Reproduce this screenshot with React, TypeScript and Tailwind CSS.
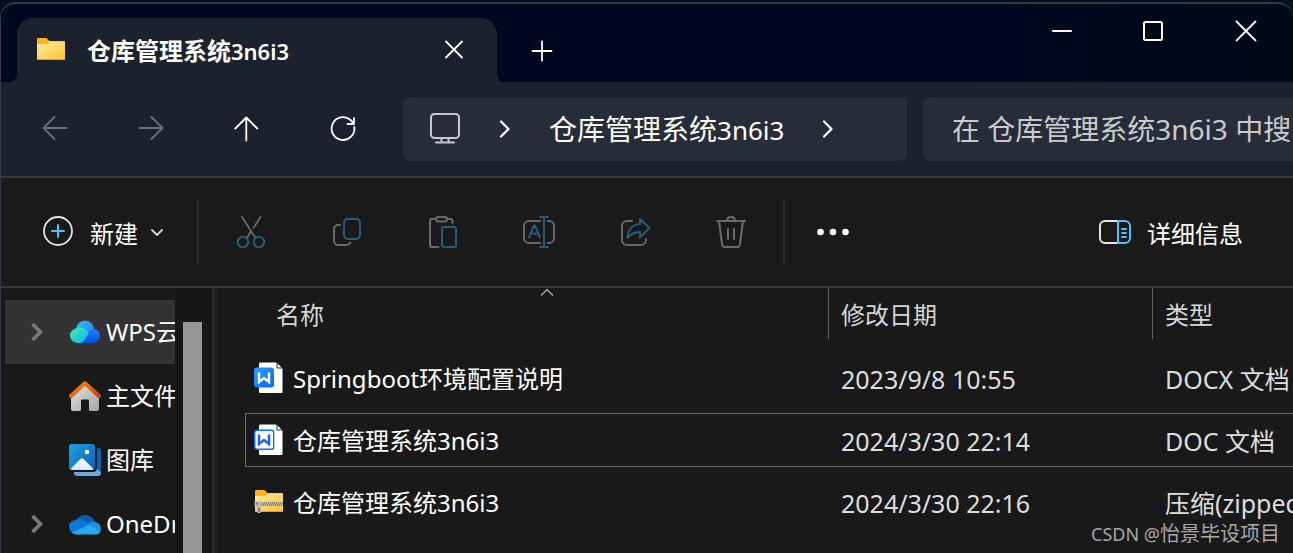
import type { ReactNode } from "react";

const FOLDER_NAME = "仓库管理系统";
const FOLDER_CODE = "3n6i3";

function FolderIcon({ zipped = false, id }: { zipped?: boolean; id: string }) {
  return (
    <svg width="32" height="32" viewBox="0 0 32 32" className="shrink-0" aria-hidden="true">
      <defs>
        <linearGradient id={id} x1="0" y1="0" x2="1" y2="1">
          <stop offset="0" stopColor="#ffe9a2" />
          <stop offset="1" stopColor="#fbc42f" />
        </linearGradient>
      </defs>
      <path d="M2 5A1 1 0 0 1 3 4H11.500L14.500 7H29A1 1 0 0 1 30 8V20H2Z" fill="#fbb419" />
      <path d="M2 10H12L15 7.500H29A1 1 0 0 1 30 8.500V25A1 1 0 0 1 29 26H3A1 1 0 0 1 2 25Z" fill={`url(#${id})`} />
      <path d="M2.500 25.500H29.500" stroke="#e3a21a" strokeWidth="1" />
      {zipped && (
        <g>
          <path d="M6 16H30V20H6Z" fill="#8b8471" />
          <path d="M8 17H30M9 19H30" stroke="#f1eee2" strokeWidth="1" strokeDasharray="1 1" />
          <path d="M1.500 15.500H8.500V20.500L7.500 27H4.500L3.500 20.500H1.500Z" fill="#b9b9b9" />
          <path d="M3 16.500H5V18.500H3Z" fill="#777" />
          <path d="M5.200 22H6.800V25.500H5.200Z" fill="#6b6b6b" />
        </g>
      )}
    </svg>
  );
}

function WpsIcon({ outlined = false, id }: { outlined?: boolean; id: string }) {
  return (
    <svg width="32" height="32" viewBox="0 0 32 32" className="shrink-0" aria-hidden="true">
      <defs>
        <linearGradient id={id} x1="0" y1="0" x2="1" y2="1">
          <stop offset="0" stopColor="#2aa0ff" />
          <stop offset="1" stopColor="#0a62f5" />
        </linearGradient>
      </defs>
      <path d="M6 1.500A1 1 0 0 1 7 .5H23.500L29.500 6.500V30A1 1 0 0 1 28.500 31H7A1 1 0 0 1 6 30Z" fill="#fff" />
      <path d="M23.500 0V5.500A1 1 0 0 0 24.500 6.500H30L23.500 0" fill="#222b38" />
      <path d="M24.500 1.500L28.500 5.500H24.500Z" fill="#fff" />
      {outlined ? (
        <rect x="1.700" y="6.200" width="19" height="19" rx="2.500" fill="#fff" stroke="#0f6bff" strokeWidth="1.400" />
      ) : (
        <rect x="1" y="5.500" width="20" height="20" rx="3" fill={`url(#${id})`} />
      )}
      <path
        d="M6 10.500V20L11 16L16 20V10.500"
        fill="none"
        stroke={outlined ? "#0f62ff" : "#fff"}
        strokeWidth="2.400"
      />
    </svg>
  );
}

function WpsCloudIcon() {
  return (
    <svg width="32" height="32" viewBox="0 0 32 32" className="shrink-0" aria-hidden="true">
      <defs>
        <linearGradient id="wc-top" x1="0" y1="0" x2="1" y2="1">
          <stop offset="0" stopColor="#38b6ff" />
          <stop offset="1" stopColor="#1687ff" />
        </linearGradient>
        <linearGradient id="wc-left" x1="0" y1="0" x2="1" y2="1">
          <stop offset="0" stopColor="#4df0a0" />
          <stop offset="1" stopColor="#00b4ff" />
        </linearGradient>
        <linearGradient id="wc-right" x1="0" y1="0" x2="0" y2="1">
          <stop offset="0" stopColor="#1d7cff" />
          <stop offset="1" stopColor="#0750d8" />
        </linearGradient>
      </defs>
      <circle cx="16" cy="13.500" r="9" fill="url(#wc-top)" />
      <path d="M12 27L19 17.500C22 10 31 13 31 19.500C31 24 28 27 23.500 27Z" fill="url(#wc-right)" />
      <path d="M9 12C14 11 18 14 19.500 18L15 24.500C13.500 26.500 12 27 9.500 27C4.500 27 1 23.500 1 19.500C1 15.500 4.500 12.500 9 12Z" fill="url(#wc-left)" />
    </svg>
  );
}

function HomeIcon() {
  return (
    <svg width="32" height="32" viewBox="0 0 32 32" className="shrink-0" aria-hidden="true">
      <defs>
        <linearGradient id="home-wall" x1="0" y1="0" x2="1" y2="1">
          <stop offset="0" stopColor="#e3e3e3" />
          <stop offset="1" stopColor="#a5a5a5" />
        </linearGradient>
        <linearGradient id="home-roof" x1="0" y1="0" x2="1" y2="1">
          <stop offset="0" stopColor="#f99113" />
          <stop offset="1" stopColor="#cf3f0c" />
        </linearGradient>
      </defs>
      <path d="M2 15.500L16 3.500L30 15.500V29A2 2 0 0 1 28 31H21.500A1.500 1.500 0 0 1 20 29.500V20.500A1 1 0 0 0 19 19.500H13A1 1 0 0 0 12 20.500V29.500A1.500 1.500 0 0 1 10.500 31H4A2 2 0 0 1 2 29Z" fill="url(#home-wall)" />
      <path d="M2 16L16 3.300L30 16" fill="none" stroke="url(#home-roof)" strokeWidth="4" strokeLinecap="round" strokeLinejoin="round" />
    </svg>
  );
}

function GalleryIcon() {
  return (
    <svg width="32" height="32" viewBox="0 0 32 32" className="shrink-0" aria-hidden="true">
      <defs>
        <linearGradient id="gal-sky" x1="0" y1="0" x2="1" y2="1">
          <stop offset="0" stopColor="#1fa0e6" />
          <stop offset="1" stopColor="#0b61b0" />
        </linearGradient>
        <linearGradient id="gal-hill" x1="0" y1="0" x2="0" y2="1">
          <stop offset="0" stopColor="#fff" />
          <stop offset="1" stopColor="#cfe8fb" />
        </linearGradient>
      </defs>
      <path d="M28 4H29.500A2.500 2.500 0 0 1 32 6.500V29A3 3 0 0 1 29 32L26 28Z" fill="#0e5fae" />
      <path d="M5 28H24Q28 28 28 24L32 29A3 3 0 0 1 29 32H8A3.500 3.500 0 0 1 5 28Z" fill="#6fa5dc" />
      <rect width="26" height="26" rx="2.500" fill="url(#gal-sky)" />
      <path d="M1.500 25L12 14.500Q13 13.700 14 14.500L24.500 25Q23.500 26 22 26H4Q2.500 26 1.500 25Z" fill="url(#gal-hill)" />
      <circle cx="18" cy="8" r="2.200" fill="#fff" />
      <path d="M27 4V24Q27 27 24 27H4" fill="none" stroke="#191919" strokeWidth="1.600" />
    </svg>
  );
}

function OneDriveIcon() {
  return (
    <svg width="32" height="32" viewBox="0 0 32 32" className="shrink-0" aria-hidden="true">
      <path d="M7.500 12A9.800 9.800 0 0 1 25.500 14L17 20Z" fill="#0a5cad" />
      <path d="M7.500 11.500C11 10.500 13.500 11.500 15.500 13L21 17L4 25.500C-2.500 21 -.5 12.500 7.500 11.500Z" fill="#0b78d4" />
      <path d="M17 17.500C20 14 24 12.800 26.500 14C31 15 32.500 19 31.800 22.500L26 24Z" fill="#1a8fe0" />
      <path d="M3 24.500L20 17L31.500 23C31 25.500 29 26.500 26.500 26.500H8C6 26.500 4 26 3 24.500Z" fill="#2aa7ee" />
    </svg>
  );
}

function LineIcon({ size = 32, color = "#fff", width = 1.8, children }: { size?: number; color?: string; width?: number; children: ReactNode }) {
  return (
    <svg width={size} height={size} viewBox={`0 0 ${size} ${size}`} fill="none" stroke={color} strokeWidth={width} strokeLinecap="round" strokeLinejoin="round" className="shrink-0" aria-hidden="true">
      {children}
    </svg>
  );
}

const GRAY = "#6a6a6a";
const BLUE = "#2a5a75";

const commands: { label: string; icon: ReactNode }[] = [
  {
    label: "剪切",
    icon: (
      <LineIcon color={GRAY}>
        <path d="M7 1L20.500 22M25.500 1L18.500 12M15.500 16L12 22" />
        <circle cx="8" cy="26" r="5.200" stroke={BLUE} strokeWidth="2" />
        <circle cx="24" cy="26" r="5.200" stroke={BLUE} strokeWidth="2" />
      </LineIcon>
    ),
  },
  {
    label: "复制",
    icon: (
      <LineIcon color={GRAY} width={2}>
        <path d="M9 9H7A4 4 0 0 0 3 13V24.500A4.500 4.500 0 0 0 7.500 29H15Q18 29 19.500 26.500" />
        <rect x="13" y="3" width="16" height="20" rx="4" stroke={BLUE} />
      </LineIcon>
    ),
  },
  {
    label: "粘贴",
    icon: (
      <LineIcon color={GRAY} width={2}>
        <path d="M9 3H5A2 2 0 0 0 3 5V29A2 2 0 0 0 5 31H11.500M20 3H23.500A2 2 0 0 1 25.500 5V7" />
        <rect x="9" y="1" width="11" height="4.500" rx="2.200" />
        <rect x="15" y="11" width="14" height="20" rx="2" stroke={BLUE} />
      </LineIcon>
    ),
  },
  {
    label: "重命名",
    icon: (
      <LineIcon color={GRAY} width={2}>
        <path d="M17 5H6A5 5 0 0 0 1 10V22A5 5 0 0 0 6 27H17M25 5H26A5 5 0 0 1 31 10V22A5 5 0 0 1 26 27H25" />
        <path d="M21 1V31M17 1H25M17 31H25M6 21.500L11 9.500H12L17 21.500M8 17.500H15" stroke={BLUE} />
      </LineIcon>
    ),
  },
  {
    label: "共享",
    icon: (
      <LineIcon color={GRAY} width={2}>
        <path d="M13 5H8A5 5 0 0 0 3 10V24A5 5 0 0 0 8 29H22A5 5 0 0 0 27 24V23" />
        <path d="M21 3L30.500 12L21 21.500V16C15 16 11 18.500 8.500 22C9 14 13.500 8.500 21 8Z" stroke={BLUE} />
      </LineIcon>
    ),
  },
  {
    label: "删除",
    icon: (
      <LineIcon color={GRAY} width={2}>
        <path d="M2 5H30M4 5L7 28Q7.300 31 10 31H22Q24.700 31 25 28L28 5M12 5Q12 1 16 1T20 5M13 13V23M19 13V23" />
      </LineIcon>
    ),
  },
];

const places: { label: string; icon: ReactNode; expandable: boolean; selected: boolean }[] = [
  { label: "WPS云盘", icon: <WpsCloudIcon />, expandable: true, selected: true },
  { label: "主文件夹", icon: <HomeIcon />, expandable: false, selected: false },
  { label: "图库", icon: <GalleryIcon />, expandable: false, selected: false },
  { label: "OneDrive", icon: <OneDriveIcon />, expandable: true, selected: false },
];

const files = [
  { name: "Springboot环境配置说明", date: "2023/9/8 10:55", type: "DOCX 文档", icon: <WpsIcon id="doc-a" />, focused: false },
  { name: "仓库管理系统3n6i3", date: "2024/3/30 22:14", type: "DOC 文档", icon: <WpsIcon id="doc-b" outlined />, focused: true },
  { name: "仓库管理系统3n6i3", date: "2024/3/30 22:16", type: "压缩(zipped)文件夹", icon: <FolderIcon id="zip-a" zipped />, focused: false },
];

function TitleBar() {
  return (
    <header className="flex h-[78px] shrink-0">
      <div className="w-4 shrink-0 rounded-br-lg bg-[#000820]" />
      <div className="w-[480px] shrink-0 bg-[#000820] pt-[14px]">
        <div className="flex h-16 items-center rounded-t-2xl bg-[#1b212d] pl-[18px]">
          <FolderIcon id="tab-folder" />
          <span className="flex-1 truncate pt-[2px] pl-5 text-2xl font-bold text-white">
            {FOLDER_NAME}
            <span className="text-[22px] font-semibold">{FOLDER_CODE}</span>
          </span>
          <button type="button" aria-label="关闭标签页" className="mr-[27px] flex size-8 items-center justify-center">
            <LineIcon size={20}>
              <path d="M2 1.500L18 17.500M18 1.500L2 17.500" />
            </LineIcon>
          </button>
        </div>
      </div>
      <div className="flex min-w-0 flex-1 justify-between rounded-bl-lg bg-[#000820] bg-linear-to-r from-[#000820] from-60% to-[#000a18]">
        <button type="button" aria-label="新建标签页" className="mt-[31px] ml-[29px] flex size-8 items-center justify-center">
          <LineIcon size={22}>
            <path d="M11 1.500V20.500M1.500 11H20.500" />
          </LineIcon>
        </button>
        <div className="flex h-[54px] pr-px">
          <button type="button" aria-label="最小化" className="flex w-[92px] items-center justify-center">
            <LineIcon size={22} width={2}>
              <path d="M2 11H20" />
            </LineIcon>
          </button>
          <button type="button" aria-label="最大化" className="flex w-[92px] items-center justify-center">
            <LineIcon size={22} width={2}>
              <rect x="1" y="2" width="18" height="18" rx="1.500" />
            </LineIcon>
          </button>
          <button type="button" aria-label="关闭" className="flex w-[92px] items-center justify-center">
            <LineIcon size={22}>
              <path d="M1.500 1.500L20.500 20.500M20.500 1.500L1.500 20.500" />
            </LineIcon>
          </button>
        </div>
      </div>
    </header>
  );
}

function NavButton({ label, color, children }: { label: string; color?: string; children: ReactNode }) {
  return (
    <button type="button" aria-label={label} className="flex h-16 w-24 shrink-0 items-center justify-center">
      <LineIcon size={28} color={color}>{children}</LineIcon>
    </button>
  );
}

function Crumb() {
  return (
    <LineIcon size={20} width={2.2}>
      <path d="M6 2.500L13.500 10L6 17.500" />
    </LineIcon>
  );
}

function NavBar() {
  return (
    <nav className="flex h-[94px] shrink-0 items-center pl-[6px]">
      <NavButton label="后退" color="#6c7079">
        <path d="M25.500 13H2.500M13.500 2L2.500 13L13.500 24" />
      </NavButton>
      <NavButton label="前进" color="#6c7079">
        <path d="M2.500 13H25.500M14.500 2L25.500 13L14.500 24" />
      </NavButton>
      <NavButton label="上移">
        <path d="M13.300 25.500V2.500M2.300 13.500L13.300 2.500L24.300 13.500" />
      </NavButton>
      <NavButton label="刷新">
        <path d="M25.300 12A11.400 11.400 0 1 1 21.500 5L25 8.500M25 3V9H18.500" />
      </NavButton>
      <div className="ml-3 flex h-16 w-[504px] shrink-0 items-center rounded-lg bg-[#272d38] pl-[26px] text-[28px] text-white">
        <LineIcon color="#c9c6cc" width={2}>
          <rect x="2" y="1" width="28" height="24" rx="3.500" />
          <path d="M12.500 25V29M19.500 25V29M7 29.500H25" />
        </LineIcon>
        <button type="button" aria-label="此电脑" className="ml-[30px] flex w-7 justify-center">
          <Crumb />
        </button>
        <button type="button" className="ml-[30px] whitespace-nowrap">
          {FOLDER_NAME}
          <span className="text-[26px]">{FOLDER_CODE}</span>
        </button>
        <button type="button" aria-label="子文件夹" className="ml-[30px] flex w-7 justify-center">
          <Crumb />
        </button>
      </div>
      <input
        type="text"
        aria-label="搜索"
        placeholder="在 仓库管理系统3n6i3 中搜索"
        className="ml-4 h-16 min-w-0 flex-1 rounded-l-lg bg-[#272d38] pl-[29px] text-[28px] text-white outline-none placeholder:text-[#c9cbce]"
      />
    </nav>
  );
}

function CommandBar() {
  return (
    <div className="flex h-[112px] shrink-0 items-center border-y-2 border-[#3a3a3a] bg-[#1a1a1a]">
      <button type="button" className="ml-[41px] flex w-[155px] shrink-0 items-center text-2xl text-white">
        <LineIcon>
          <circle cx="16" cy="15" r="14" stroke="#e4e4e4" />
          <path d="M16 9V21M10 15H22" stroke="#4cc2ff" strokeWidth="2" />
        </LineIcon>
        <span className="pt-[3px] pl-4">新建</span>
        <span className="pl-3">
          <LineIcon size={14} color="#d6d6d6">
            <path d="M2 5L7 10L12 5" />
          </LineIcon>
        </span>
      </button>
      <div className="h-16 w-[2px] bg-[#2c2c2c]" />
      <div className="flex px-1">
        {commands.map((c) => (
          <button key={c.label} type="button" disabled aria-label={c.label} className="flex h-16 w-24 items-center justify-center">
            {c.icon}
          </button>
        ))}
      </div>
      <div className="h-16 w-[2px] bg-[#2c2c2c]" />
      <button type="button" aria-label="查看更多" className="flex h-16 w-24 items-center justify-center">
        <svg width="34" height="32" viewBox="0 0 34 32" fill="#fff" aria-hidden="true">
          <circle cx="4.500" cy="16" r="3.300" />
          <circle cx="17" cy="16" r="3.300" />
          <circle cx="29.500" cy="16" r="3.300" />
        </svg>
      </button>
      <button type="button" className="mr-[50px] ml-auto flex items-center text-2xl whitespace-nowrap text-white">
        <LineIcon color="#e4e4e4" width={2}>
          <path d="M18 5H6A5 5 0 0 0 1 10V22A5 5 0 0 0 6 27H18" />
          <path d="M19 5H26A5 5 0 0 1 31 10V22A5 5 0 0 1 26 27H19ZM23 13H27M23 17H27M23 21H27" stroke="#4cc2ff" />
        </LineIcon>
        <span className="pt-[3px] pl-4">详细信息</span>
      </button>
    </div>
  );
}

function Sidebar() {
  return (
    <aside className="flex w-[211px] shrink-0 bg-[#171717]">
      <ul className="w-[174px] overflow-hidden bg-[#191919] pt-3 pl-1">
        {places.map((p) => (
          <li key={p.label} className={p.selected ? "bg-[#333333]" : ""}>
            <a href="#" className="flex h-16 items-center overflow-hidden text-2xl whitespace-nowrap text-white">
              <span className="flex w-16 shrink-0 justify-center">
                {p.expandable && (
                  <svg width="20" height="20" viewBox="0 0 20 20" fill="none" stroke="#7a7a7a" strokeWidth="3.600" aria-hidden="true">
                    <path d="M5.500 2L13.500 10L5.500 18" />
                  </svg>
                )}
              </span>
              {p.icon}
              <span className="pl-[5px]">{p.label}</span>
            </a>
          </li>
        ))}
      </ul>
      <div className="ml-2 w-[19px] pt-[34px]">
        <div className="h-full bg-[#969696]" />
      </div>
    </aside>
  );
}

function FileTable() {
  return (
    <table className="w-full min-w-[1172px] table-fixed border-collapse text-left text-[#dedede]">
      <colgroup>
        <col className="w-[587px]" />
        <col className="w-[324px]" />
        <col />
      </colgroup>
      <thead className="text-2xl text-[#d6d6d6]">
        <tr className="h-[59px] align-top">
          <th className="p-0 font-normal">
            <div className="flex h-[51px] flex-col pl-6">
              <span className="self-center">
                <svg width="14" height="9" viewBox="0 0 14 9" fill="none" stroke="#b5b5b5" strokeWidth="1.200" className="block" aria-hidden="true">
                  <path d="M1 7.500L7 1.500L13 7.500" />
                </svg>
              </span>
              <span className="pl-[11px] leading-9">名称</span>
            </div>
          </th>
          <th className="p-0 font-normal">
            <div className="h-[51px] border-l border-[#636363] pt-[9px] pl-3 leading-9">修改日期</div>
          </th>
          <th className="p-0 font-normal">
            <div className="h-[51px] border-l border-[#636363] pt-[9px] pl-3 leading-9">类型</div>
          </th>
        </tr>
      </thead>
      <tbody className="text-[25px] leading-8 whitespace-nowrap">
        {files.map((f) => (
          <tr key={f.date} className={f.focused ? "h-[62px] outline-1 -outline-offset-5 outline-[#6a6a6a]" : "h-[62px]"}>
            <td className="p-0">
              <div className="flex items-center gap-2 pl-3 text-2xl text-white">
                {f.icon}
                <span className="pt-[2px]">{f.name}</span>
              </div>
            </td>
            <td className="p-0 pt-[2px] pl-[13px]">{f.date}</td>
            <td className="p-0 pt-[2px] pl-[13px]">{f.type}</td>
          </tr>
        ))}
      </tbody>
    </table>
  );
}

export default function App() {
  return (
    <div className="relative flex h-screen flex-col overflow-hidden bg-[#02101f] pt-[2px] font-['Noto_Sans','Noto_Sans_CJK_SC',sans-serif]">
      <div className="flex min-h-0 flex-1 flex-col overflow-hidden rounded-t-2xl border-t-2 border-l border-[#333b48] bg-[#1b212d]">
        <TitleBar />
        <NavBar />
        <CommandBar />
        <div className="flex min-h-0 flex-1 bg-[#191919]">
          <Sidebar />
          <div className="w-[2px] shrink-0 bg-[#2b2b2b]" />
          <div className="w-[3px] shrink-0 bg-[#202020]" />
          <main className="min-w-0 flex-1 overflow-hidden pl-6">
            <FileTable />
          </main>
        </div>
      </div>
      <div className="absolute right-[13px] bottom-[5px] text-xl text-[#a8a8a8]">
        <span className="text-lg">CSDN @</span>怡景毕设项目
      </div>
    </div>
  );
}
